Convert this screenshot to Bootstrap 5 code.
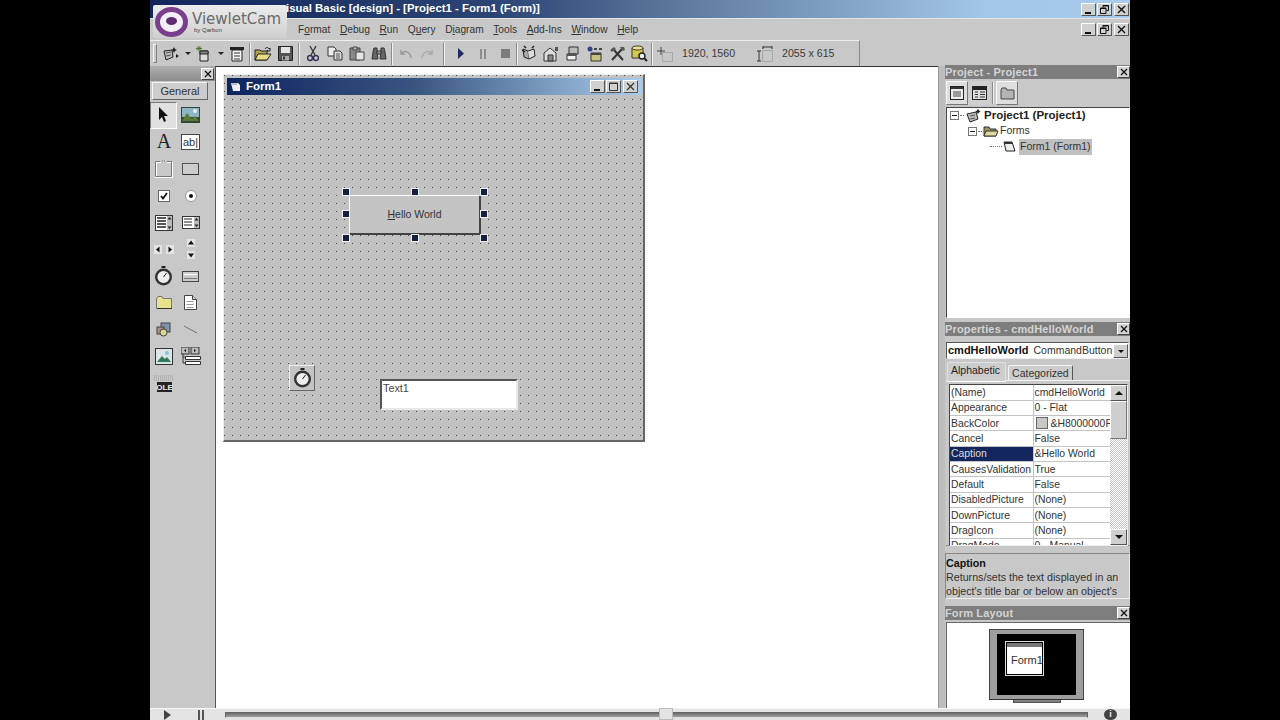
<!DOCTYPE html>
<html lang="en">
<head>
<meta charset="UTF-8">
<title>Project1 - Microsoft Visual Basic [design]</title>
<link rel="stylesheet" href="https://cdn.jsdelivr.net/npm/bootstrap@5.3.0/dist/css/bootstrap.min.css">
<style>
body { background: #000; font-family: "Liberation Sans", Arial, sans-serif; font-size: 11px; color: #222; }
svg { display: block; }
.vb-app { width: 980px; height: 720px; margin: 0 auto; background: #c8c8c8; overflow: hidden; position: relative; }
.vb-titlebar { height: 19px; background: linear-gradient(90deg, #12265c 0%, #2b4474 35%, #5e7ca0 55%, #a4c6e6 85%, #aaccec 100%); color: #fff; font-weight: 700; font-size: 11.4px; padding-left: 136px; border-bottom: 1px solid #e4e4e4; }
.vb-menubar { height: 21px; padding-left: 148px; gap: 9.6px; font-size: 10.2px; color: #333; }
.vb-wbtns { margin-left: auto; margin-right: 1px; gap: 1px; }
.vb-wbtn { width: 15px; height: 13px; background: #d0d0d0; border: 1px solid; border-color: #fff #555 #555 #fff; display: flex; align-items: center; justify-content: center; padding: 0; }
.vb-wbtn-x { margin-left: 1px; }
.vb-toolbar { height: 26px; }
.vb-tools { width: 710px; height: 26px; padding-left: 10px; border-top: 1px solid #eee; border-right: 1px solid #888; position: relative; }
.vb-grip { position: absolute; left: 3px; top: 3px; bottom: 3px; width: 4px; border: 1px solid; border-color: #f2f2f2 #808080 #808080 #f2f2f2; }
.vb-ti { width: 22px; height: 24px; display: flex; align-items: center; justify-content: center; flex: none; }
.vb-drop { width: 11px; height: 24px; display: flex; align-items: center; justify-content: center; flex: none; }
.vb-drop::after { content: ""; border: 3px solid transparent; border-top-color: #222; border-bottom: 0; }
.vb-sep { width: 6px; height: 22px; flex: none; display: flex; justify-content: center; }
.vb-sep::after { content: ""; width: 2px; background: linear-gradient(90deg, #8c8c8c 50%, #f0f0f0 50%); }
.vb-sep-s { width: 4px; }
.vb-sep-m { width: 12px; }
.vb-sep-t { width: 2px; }
.vb-coord { font-size: 10.6px; color: #3a3a3a; padding-left: 6px; width: 78px; flex: none; }
.vb-main { height: 642px; }
.vb-toolbox { width: 65px; flex: none; }
.vb-dock-x { width: 13px; height: 12px; background: #d4d4d4; border: 1px solid; border-color: #fff #444 #444 #fff; display: flex; align-items: center; justify-content: center; padding: 0; }
.vb-tbox-head { height: 15px; background: linear-gradient(180deg, #b0b0b0, #8c8c8c); justify-content: flex-end; padding-right: 1px; }
.vb-general { width: 56px; height: 18px; margin: 1px 0 2px 2px; background: #cdcdcd; border: 1px solid; border-color: #f4f4f4 #666 #666 #f4f4f4; text-align: center; line-height: 16px; font-size: 11px; color: #333; }
.vb-tgrid { display: grid; grid-template-columns: 27px 27px; grid-auto-rows: 26.8px; }
.vb-tcell { display: flex; align-items: center; justify-content: center; }
.vb-tcell-on { background: #e0e0e0; border: 1px solid; border-color: #777 #fff #fff #777; }
.vb-canvas { width: 723px; flex: none; background: #fff; border-top: 1px solid #333; border-left: 1px solid #555; position: relative; }
.vb-form { position: absolute; left: 7px; top: 7px; width: 422px; height: 368px; border-right: 2px solid #666; border-bottom: 2px solid #666; border-top: 1px solid #eee; border-left: 1px solid #eee; background-color: #4a4a4a; background-image: linear-gradient(90deg, transparent 1px, #c2c2c2 1px), linear-gradient(180deg, transparent 1px, #c2c2c2 1px); background-size: 8px 8px; }
.vb-form-title { position: absolute; left: 3px; top: 3px; width: 414px; height: 17px; background: linear-gradient(90deg, #0e2460 0%, #385580 45%, #a9cbec 100%); color: #fff; font-weight: 700; font-size: 11.5px; padding: 0 3px; gap: 4px; }
.vb-form-btns { margin-left: auto; gap: 1px; }
.vb-cmd { position: absolute; left: 125px; top: 120px; width: 132px; height: 40px; background: #c4c4c4; border: 1px solid; border-color: #fff #444 #444 #fff; border-width: 1px 2px 2px 1px; text-align: center; line-height: 37px; color: #333; font-size: 10.5px; }
.vb-handle { position: absolute; width: 6px; height: 6px; background: #14203e; outline: 1px solid #eee; }
.vb-h1 { left: 119px; top: 114px; } .vb-h2 { left: 188px; top: 114px; } .vb-h3 { left: 257px; top: 114px; }
.vb-h4 { left: 119px; top: 136px; } .vb-h5 { left: 257px; top: 136px; }
.vb-h6 { left: 119px; top: 160px; } .vb-h7 { left: 188px; top: 160px; } .vb-h8 { left: 257px; top: 160px; }
.vb-timer { position: absolute; left: 65px; top: 290px; width: 26px; height: 26px; background: #c4c4c4; border: 1px solid; border-color: #eee #666 #666 #eee; display: flex; align-items: center; justify-content: center; }
.vb-text { position: absolute; left: 156px; top: 304px; width: 138px; height: 31px; background: #fff; border: 2px solid; border-color: #555 #e8e8e8 #e8e8e8 #555; padding: 1px 0 0 1px; line-height: 13px; font-size: 10.8px; color: #444; }
.vb-gapcol { width: 7px; flex: none; background: #bdbdbd; border-left: 1px solid #999; }
.vb-right { width: 185px; flex: none; margin-top: -1px; }
.vb-ptitle { height: 14px; background: #7d7d7d; color: #d4d4d4; font-weight: 700; font-size: 11px; letter-spacing: .15px; flex: none; }
.vb-ptitle .vb-dock-x { margin-left: auto; }
.vb-ptools { height: 28px; padding-left: 1px; flex: none; }
.vb-pt { width: 22px; height: 24px; display: flex; align-items: center; justify-content: center; background: #cfcfcf; }
.vb-pt-on { background: #dedede; border: 1px solid; border-color: #f8f8f8 #777 #777 #f8f8f8; }
.vb-psep { width: 2px; height: 22px; margin: 0 2px; background: linear-gradient(90deg, #8c8c8c 50%, #f0f0f0 50%); }
.vb-tree { height: 211px; margin-left: 1px; background: #fff; border: 1px solid; border-color: #444 #fff #fff #444; padding: 0 0 0 3px; flex: none; color: #333; font-size: 10.5px; }
.vb-trow { height: 15.5px; gap: 1px; }
.vb-trow-1 { font-size: 11.5px; font-weight: 700; color: #222; }
.vb-trow-2 { padding-left: 18px; }
.vb-trow-3 { padding-left: 40px; }
.vb-exp { width: 9px; height: 9px; border: 1px solid #777; background: #fff; display: flex; align-items: center; justify-content: center; flex: none; }
.vb-exp::after { content: ""; width: 5px; height: 1px; background: #222; }
.vb-dots { width: 4px; border-top: 1px dotted #777; flex: none; }
.vb-dots-long { width: 12px; }
.vb-tsel { background: #c0c0c0; padding: 0 1px; margin-left: 2px; }
.vb-combo { height: 17px; margin: 6px 1px 0 1px; background: #fff; border: 1px solid; border-color: #555 #eee #eee #555; padding-left: 1px; flex: none; color: #333; white-space: nowrap; overflow: hidden; font-size: 10.5px; }
.vb-combo b { font-size: 11px; color: #111; margin-right: 5px; }
.vb-combo-btn { margin-left: auto; width: 15px; height: 14px; background: #cfcfcf; border: 1px solid; border-color: #fff #555 #555 #fff; display: flex; align-items: center; justify-content: center; flex: none; }
.vb-combo-btn::after { content: ""; border: 3px solid transparent; border-top-color: #111; border-bottom: 0; margin-top: 2px; }
.vb-right .nav-tabs { margin: 3px 0 0 2px; border: 0; height: 18px; gap: 2px; flex: none; }
.vb-right .nav-link { padding: 0 3px; font-size: 10.5px; line-height: 14px; height: 16px; margin-top: 3px; color: #333; background: #cdcdcd; border: 1px solid; border-color: #f4f4f4 #555 transparent #f4f4f4; border-radius: 2px 2px 0 0; }
.vb-right .nav-link.active { height: 20px; margin-top: 0; background: #cdcdcd; color: #222; padding: 0 5px 0 3px; line-height: 15px; position: relative; }
.vb-sheet { height: 166px; margin: 0 0 0 1px; padding: 3px 3px 0 3px; border-top: 1px solid #f4f4f4; border-bottom: 1px solid #888; flex: none; }
.vb-grid { width: 179px; height: 162px; border: 1px solid; border-color: #444 #eee #eee #444; background: #fff; overflow: hidden; }
.vb-gridbody { width: 160px; height: 160px; overflow: hidden; flex: none; }
.vb-props { width: 160px; border-collapse: collapse; table-layout: fixed; color: #333; font-size: 10.4px; }
.vb-props td { height: 15.33px; padding: 0 0 0 1px; border-bottom: 1px solid #c4c4c4; white-space: nowrap; overflow: hidden; line-height: 13px; }
.vb-props td:first-child { width: 83px; border-right: 1px solid #c4c4c4; }
.vb-props .vb-selrow { background: #14265e; color: #ddd; }
.vb-swatch { display: inline-block; width: 12px; height: 12px; background: #c8c8c8; border: 1px solid #666; margin: 0 3px 0 1px; vertical-align: -2px; }
.vb-scroll { width: 17px; flex: none; background: repeating-conic-gradient(#fff 0 25%, #c4c4c4 0 50%) 0 0 / 2px 2px; }
.vb-sbtn { width: 17px; height: 16px; background: #cfcfcf; border: 1px solid; border-color: #fff #555 #555 #fff; display: flex; align-items: center; justify-content: center; flex: none; }
.vb-sbtn-up::after { content: ""; border: 4px solid transparent; border-bottom-color: #111; border-top: 0; }
.vb-sbtn-dn::after { content: ""; border: 4px solid transparent; border-top-color: #111; border-bottom: 0; }
.vb-sthumb { height: 38px; width: 17px; background: #cfcfcf; border: 1px solid; border-color: #fff #777 #777 #fff; flex: none; }
.vb-desc { height: 46px; margin: 7px 0 0 0; padding: 2px 0 0 0; border: 1px solid; border-color: #888 #eee #eee #888; color: #333; line-height: 14px; font-size: 10.7px; overflow: hidden; flex: none; white-space: nowrap; }
.vb-desc b { color: #111; display: block; }
.vb-ptitle-form { margin-top: 7px; }
.vb-layout { flex: 1; background: #fff; margin: 2px 0 0 1px; border-left: 1px solid #666; border-top: 1px solid #666; padding-top: 6px; }
.vb-monitor { width: 95px; height: 75px; margin-left: 42px; position: relative; }
.vb-mon-frame { width: 95px; height: 71px; background: #9e9e9e; border: 1px solid #444; border-color: #444 #444 #333 #444; padding: 4px 7px; }
.vb-mon-screen { width: 79px; height: 61px; background: #000; position: relative; }
.vb-mon-base { width: 48px; height: 3px; background: #808080; border: 1px solid #555; border-top: 0; margin: 0 auto; }
.vb-mon-form { position: absolute; left: 9px; top: 8px; width: 37px; height: 33px; background: #fff; border: 1px solid #000; outline: 1px solid #ddd; font-size: 11px; color: #333; line-height: 12px; white-space: nowrap; overflow: hidden; }
.vb-mon-form i { display: block; height: 4px; margin-bottom: 7px; background: #777; }
.vb-mon-form span { padding-left: 4px; }
.vb-player { height: 12px; background: #e4e4e4; border-top: 1px solid #f6f6f6; position: relative; }
.vb-pbtn { width: 34px; flex: none; justify-content: center; }
.vb-track { flex: none; width: 863px; margin-left: 7px; height: 6px; background: linear-gradient(180deg, #6c6c6c, #a0a0a0); border: 1px solid #666; border-bottom-color: #ddd; position: relative; }
.vb-thumb { position: absolute; left: 433px; top: -5px; width: 14px; height: 12px; background: #e4e4e4; border: 1px solid #bbb; }
.vb-info { margin-left: 16px; width: 13px; height: 11px; border-radius: 50%; background: #444; color: #eee; font-size: 9px; line-height: 11px; text-align: center; font-weight: 700; }
.vb-logo { position: absolute; left: 3px; top: 5px; width: 134px; height: 33px; background: linear-gradient(180deg, #ececec, #cfcfcf); gap: 4px; padding-left: 2px; border-radius: 2px; }
.vb-logo-name { font-family: "DejaVu Sans", sans-serif; font-size: 15px; line-height: 15px; color: #6a6a6a; white-space: nowrap; margin-top: 3px; }
.vb-logo-by { font-size: 6px; line-height: 7px; color: #444; margin-left: 2px; }
</style>
</head>
<body>
<div class="vb-app d-flex flex-column">

  <div class="vb-titlebar d-flex align-items-center position-relative">
    <span>isual Basic [design] - [Project1 - Form1 (Form)]</span>
    <div class="vb-wbtns d-flex">
      <div class="vb-wbtn"><svg width="9" height="9"><rect x="1" y="7" width="6" height="2" fill="#111"/></svg></div>
      <div class="vb-wbtn"><svg width="9" height="9" fill="none" stroke="#111"><path d="M3 2.5V.5h5.500v5H6.500M.5 3h5.500v5.500H.5z"/><path d="M3 1h5M1 3.500h5"/></svg></div>
      <div class="vb-wbtn vb-wbtn-x"><svg width="9" height="9" stroke="#111" stroke-width="1.400"><path d="M1 1l7 7M8 1l-7 7"/></svg></div>
    </div>
  </div>

  <div class="vb-menubar d-flex align-items-center">
    <span>F<u>o</u>rmat</span><span><u>D</u>ebug</span><span><u>R</u>un</span><span>Q<u>u</u>ery</span><span>D<u>i</u>agram</span><span><u>T</u>ools</span><span><u>A</u>dd-Ins</span><span><u>W</u>indow</span><span><u>H</u>elp</span>
    <div class="vb-wbtns d-flex">
      <div class="vb-wbtn"><svg width="9" height="9"><rect x="1" y="7" width="6" height="2" fill="#111"/></svg></div>
      <div class="vb-wbtn"><svg width="9" height="9" fill="none" stroke="#111"><path d="M3 2.500V.5h5.500v5H6.500M.5 3h5.500v5.500H.5z"/><path d="M3 1h5M1 3.500h5"/></svg></div>
      <div class="vb-wbtn vb-wbtn-x"><svg width="9" height="9" stroke="#111" stroke-width="1.400"><path d="M1 1l7 7M8 1l-7 7"/></svg></div>
    </div>
  </div>

  <div class="vb-toolbar">
    <div class="vb-tools d-flex align-items-center">
      <div class="vb-grip"></div>
      <div class="vb-ti"><svg width="18" height="18" viewBox="0 0 18 18"><path d="M2 6l8-1 1 7-7 3z" fill="#bbb" stroke="#222"/><path d="M4 8l5-1M4 11l5-1" stroke="#555"/><path d="M12 2l1 2 2 1-2 1-1 2-1-2-2-1 2-1zM14 9l3 2-3 2z" fill="#222"/></svg></div>
      <div class="vb-drop"></div>
      <div class="vb-ti"><svg width="18" height="18" viewBox="0 0 18 18"><path d="M5 6h8v10H5z" fill="#ddd" stroke="#222"/><path d="M5 6h8v3H5z" fill="#888" stroke="#222"/><path d="M4 1v5M1 3.500h6M2 1.500l4 4M6 1.500l-4 4" stroke="#4c7a2e"/></svg></div>
      <div class="vb-drop"></div>
      <div class="vb-ti"><svg width="16" height="18" viewBox="0 0 16 18"><path d="M1 2h14v3H1z" fill="#222"/><path d="M3 5h10v11H3z" fill="#f4f4f4" stroke="#222"/><path d="M5 8h6M5 11h6M5 14h6" stroke="#333"/></svg></div>
      <div class="vb-sep vb-sep-s"></div>
      <div class="vb-ti"><svg width="18" height="16" viewBox="0 0 18 16"><path d="M1 4h5l1 1h6v9H1z" fill="#b0a24e" stroke="#222"/><path d="M1 14l3-6h13l-4 6z" fill="#e9dc86" stroke="#222"/><path d="M11 3c1-2 3-2 4 0l1-1v3h-3l1-1" fill="none" stroke="#222"/></svg></div>
      <div class="vb-ti"><svg width="15" height="15" viewBox="0 0 15 15"><path d="M.5.5h14v14H.5z" fill="#555" stroke="#222"/><path d="M3 1h9v6H3z" fill="#e6e6e6"/><path d="M4 10h7v4.500H4z" fill="#aaa"/><path d="M5 10.500h2v3H5z" fill="#333"/></svg></div>
      <div class="vb-sep"></div>
      <div class="vb-ti"><svg width="12" height="17" viewBox="0 0 12 17" fill="none"><path d="M3 1l5 9M9 1L4 10" stroke="#333" stroke-width="1.300"/><circle cx="3" cy="13" r="2.500" stroke="#335" stroke-width="1.500"/><circle cx="9" cy="13" r="2.500" stroke="#335" stroke-width="1.500"/></svg></div>
      <div class="vb-ti"><svg width="16" height="15" viewBox="0 0 16 15"><path d="M1 1h6l2 2v7H1z" fill="#eee" stroke="#333"/><path d="M7 5h6l2 2v7H7z" fill="#ddd" stroke="#333"/><path d="M9 8h4M9 10h4M9 12h4" stroke="#555"/></svg></div>
      <div class="vb-ti"><svg width="16" height="15" viewBox="0 0 16 15"><path d="M1 2h10v12H1z" fill="#888" stroke="#444"/><path d="M4 1h4v3H4z" fill="#bbb" stroke="#444"/><path d="M7 6h8v8H7z" fill="#e4e4e4" stroke="#444"/></svg></div>
      <div class="vb-ti"><svg width="16" height="14" viewBox="0 0 16 14"><path d="M3 1h3v4l1 7H1l1-7zM10 1h3l1 4 1 7H9l1-7z" fill="#666" stroke="#333"/><path d="M6 4h4v3H6z" fill="#999" stroke="#333"/></svg></div>
      <div class="vb-sep vb-sep-s"></div>
      <div class="vb-ti"><svg width="15" height="12" viewBox="0 0 15 12" fill="none" stroke="#999" stroke-width="1.500"><path d="M3 2v4h4M3 6c3-4 9-3 10 4"/></svg></div>
      <div class="vb-ti"><svg width="15" height="12" viewBox="0 0 15 12" fill="none" stroke="#aaa" stroke-width="1.500"><path d="M12 2v4H8M12 6C9 2 3 3 2 10"/></svg></div>
      <div class="vb-sep vb-sep-m"></div>
      <div class="vb-ti"><svg width="8" height="11" viewBox="0 0 8 11"><path d="M1 0l6 5.500L1 11z" fill="#1e2a64"/></svg></div>
      <div class="vb-ti"><svg width="8" height="10" viewBox="0 0 8 10"><path d="M1 0h2v10H1zM5 0h2v10H5z" fill="#8c8c8c"/></svg></div>
      <div class="vb-ti"><svg width="9" height="9" viewBox="0 0 9 9"><rect width="9" height="9" fill="#7c7c7c"/></svg></div>
      <div class="vb-sep vb-sep-t"></div>
      <div class="vb-ti"><svg width="16" height="17" viewBox="0 0 16 17"><path d="M2 4l5 2 1 8-5-2z" fill="#aaa" stroke="#222"/><path d="M8 14l6-3-1-7-6 2" fill="#ddd" stroke="#222"/><path d="M3 1l2 2M13 1l-2 2M1 5l3 2" stroke="#222" stroke-width="1.500"/></svg></div>
      <div class="vb-ti"><svg width="16" height="16" viewBox="0 0 16 16"><path d="M1 7l6-5 6 5v8H1z" fill="#ddd" stroke="#333"/><path d="M5 9h5v6H5z" fill="#888" stroke="#333"/><path d="M12 1h3v4h-3z" fill="#555"/></svg></div>
      <div class="vb-ti"><svg width="15" height="15" viewBox="0 0 15 15"><path d="M3 1h9v7H3z" fill="#bbb" stroke="#333"/><path d="M1 8h9v6H1z" fill="#f2f2f2" stroke="#333"/><path d="M1 8h9v2H1z" fill="#555"/></svg></div>
      <div class="vb-ti"><svg width="17" height="16" viewBox="0 0 17 16"><circle cx="3" cy="3" r="2.500" fill="#26468a"/><path d="M7 2h3v2H7zM12 2h3v2h-3z" fill="#444"/><path d="M4 7h10v8H4z" fill="#c7c27a" stroke="#333"/><path d="M4 7h10v2H4z" fill="#444"/></svg></div>
      <div class="vb-ti"><svg width="17" height="16" viewBox="0 0 17 16"><path d="M3 14L13 3M14 14L5 4" stroke="#333" stroke-width="2"/><path d="M1 4l4-3 2 2-4 3zM11 1h4l1 3-3 1z" fill="#555"/></svg></div>
      <div class="vb-ti"><svg width="18" height="17" viewBox="0 0 18 17"><path d="M2 3h11v10H2z" fill="#d4c648" stroke="#333"/><ellipse cx="7.500" cy="3" rx="5.500" ry="2" fill="#efe48a" stroke="#333"/><circle cx="12" cy="11" r="3" fill="#eee" stroke="#222" stroke-width="1.400"/><path d="M14 13l3 3" stroke="#222" stroke-width="2"/></svg></div>
      <div class="vb-sep vb-sep-s"></div>
      <div class="vb-ti"><svg width="16" height="16" viewBox="0 0 16 16" fill="none"><path d="M4 1v8M0 5h8" stroke="#444"/><path d="M5.500 6.500h10v9h-10z" stroke="#888" stroke-dasharray="1 1"/></svg></div>
      <div class="vb-coord">1920, 1560</div>
      <div class="vb-ti"><svg width="16" height="16" viewBox="0 0 16 16" fill="none"><path d="M5.500 4.500h10v11h-10z" stroke="#888" stroke-dasharray="1 1"/><path d="M6 1h9M6 0v3M15 0v3M2 5v10M0 5h4M0 15h4" stroke="#333"/></svg></div>
      <div class="vb-coord">2055 x 615</div>
    </div>
  </div>

  <div class="vb-main d-flex">
    <div class="vb-toolbox d-flex flex-column">
      <div class="vb-tbox-head d-flex align-items-center">
        <div class="vb-dock-x"><svg width="8" height="8" stroke="#111" stroke-width="1.300"><path d="M1 1l6 6M7 1l-6 6"/></svg></div>
      </div>
      <div class="vb-general">General</div>
      <div class="vb-tgrid">
        <div class="vb-tcell vb-tcell-on"><svg width="12" height="16" viewBox="0 0 12 16"><path d="M1 0v13l3-3 2 5 2-1-2-5h4z" fill="#111"/></svg></div>
        <div class="vb-tcell"><svg width="19" height="16" viewBox="0 0 19 16"><rect width="19" height="16" fill="#2e4a34"/><rect x="1" y="1" width="17" height="9" fill="#8fb6c8"/><path d="M1 14l5-8 5 6 3-3 4 5z" fill="#5a7a3a"/><circle cx="14" cy="4" r="2" fill="#eee"/></svg></div>
        <div class="vb-tcell"><svg width="20" height="24" viewBox="0 0 20 24"><text x="10" y="18" font-family="Liberation Serif, serif" font-size="20" fill="#222" text-anchor="middle">A</text></svg></div>
        <div class="vb-tcell"><svg width="19" height="16" viewBox="0 0 19 16"><rect x=".5" y=".5" width="18" height="15" fill="#fff" stroke="#444"/><text x="9.500" y="12" font-family="Liberation Sans, sans-serif" font-size="11" fill="#333" text-anchor="middle">ab|</text></svg></div>
        <div class="vb-tcell"><svg width="18" height="18" viewBox="0 0 18 18" fill="none"><path d="M1 2h5M12 2h5M1 2v15h16V2" stroke="#fff" stroke-width="2"/><path d="M.5 1.500h5M12 1.500h5M.5 1.500v15h16v-15" stroke="#777"/><path d="M7 1h4" stroke="#777" stroke-dasharray="1 1"/></svg></div>
        <div class="vb-tcell"><svg width="17" height="12" viewBox="0 0 17 12"><rect x=".5" y=".5" width="16" height="11" fill="#ccc" stroke="#555"/><path d="M1 11.500h16V1" stroke="#333" fill="none"/></svg></div>
        <div class="vb-tcell"><svg width="12" height="12" viewBox="0 0 12 12"><rect x=".5" y=".5" width="11" height="11" fill="#fff" stroke="#666"/><path d="M3 6l2 2.500L9 3" fill="none" stroke="#111" stroke-width="1.800"/></svg></div>
        <div class="vb-tcell"><svg width="12" height="12" viewBox="0 0 12 12"><circle cx="6" cy="6" r="5.500" fill="#fff" stroke="#999"/><circle cx="6" cy="6" r="2" fill="#111"/></svg></div>
        <div class="vb-tcell"><svg width="18" height="16" viewBox="0 0 18 16"><rect x=".5" y=".5" width="17" height="15" fill="#fff" stroke="#333"/><path d="M2 3h9M2 6h9M2 9h9M2 12h9" stroke="#222" stroke-width="1.300"/><rect x="12" y="1" width="5" height="14" fill="#bbb"/><path d="M14.500 2l2 2.500h-4zM14.500 14l2-2.500h-4z" fill="#222"/></svg></div>
        <div class="vb-tcell"><svg width="18" height="13" viewBox="0 0 18 13"><rect x=".5" y=".5" width="17" height="12" fill="#fff" stroke="#333"/><path d="M2 3h8M2 6h8M2 9h8" stroke="#222" stroke-width="1.200"/><rect x="12" y="1" width="5" height="11" fill="#bbb"/><path d="M14.500 2l2 2.500h-4zM14.500 11l2-2.500h-4z" fill="#222"/></svg></div>
        <div class="vb-tcell gap-1"><svg width="8" height="9" viewBox="0 0 8 9"><rect width="8" height="9" fill="#e4e4e4"/><path d="M5.500 1.500L2 4.500l3.500 3z" fill="#111"/></svg><svg width="8" height="9" viewBox="0 0 8 9"><rect width="8" height="9" fill="#e4e4e4"/><path d="M2.500 1.500L6 4.500l-3.500 3z" fill="#111"/></svg></div>
        <div class="vb-tcell flex-column gap-1"><svg width="8" height="8" viewBox="0 0 8 8"><rect width="8" height="8" fill="#e4e4e4"/><path d="M4 1.500L1 5.500h6z" fill="#111"/></svg><svg width="8" height="8" viewBox="0 0 8 8"><rect width="8" height="8" fill="#e4e4e4"/><path d="M4 6.500L1 2.500h6z" fill="#111"/></svg></div>
        <div class="vb-tcell"><svg width="17" height="20" viewBox="0 0 17 20"><path d="M6.500 0h4v2h-4z" fill="#222"/><circle cx="8.500" cy="11" r="7.300" fill="#eee" stroke="#333" stroke-width="2.400"/><path d="M8.500 11l3-4" stroke="#222"/></svg></div>
        <div class="vb-tcell"><svg width="17" height="11" viewBox="0 0 17 11"><rect x=".5" y=".5" width="16" height="10" fill="#ccc" stroke="#444"/><path d="M2 3.500h13" stroke="#fff"/><path d="M2 7.500h13" stroke="#777"/></svg></div>
        <div class="vb-tcell"><svg width="16" height="13" viewBox="0 0 16 13"><path d="M.5 3v9.500h15v-10H7L6 .5H2z" fill="#e8e28c" stroke="#777"/><path d="M1 12.500h15" stroke="#333"/></svg></div>
        <div class="vb-tcell"><svg width="13" height="15" viewBox="0 0 13 15"><path d="M.5.5h8l4 4v10H.5z" fill="#fff" stroke="#444"/><path d="M8.500.5v4h4" fill="#ccc" stroke="#444"/><path d="M2.500 6h7v1h-7zM2.500 9h7v1h-7zM2.500 12h7v1h-7z" fill="#999"/></svg></div>
        <div class="vb-tcell"><svg width="15" height="15" viewBox="0 0 15 15"><rect x="5" y="1" width="9" height="9" fill="#7d93ad" stroke="#444"/><rect x="1" y="5" width="7" height="7" fill="#b38f7e" stroke="#444"/><circle cx="7.500" cy="10.500" r="3.500" fill="#dcd98a" stroke="#444"/></svg></div>
        <div class="vb-tcell"><svg width="15" height="9" viewBox="0 0 15 9"><path d="M1 1l13 7" stroke="#777"/></svg></div>
        <div class="vb-tcell"><svg width="18" height="17" viewBox="0 0 18 17"><rect x=".5" y=".5" width="17" height="16" fill="#dce6e6" stroke="#333"/><path d="M2 14l5-6 3 3 2-2 4 5z" fill="#2f7a5a"/><circle cx="12" cy="5" r="2" fill="#89c1d6"/></svg></div>
        <div class="vb-tcell"><svg width="20" height="19" viewBox="0 0 20 19"><rect y="0" width="8" height="7" fill="#bbb" stroke="#333"/><rect x="10" y="0" width="8" height="7" fill="#bbb" stroke="#333"/><path d="M5 2L3 3.500 5 5zM13 2l2 1.500L13 5z" fill="#111"/><path d="M2 7v9h2M2 10h2" stroke="#333" fill="none"/><path d="M4.500 9.500h15v3h-15zM4.500 14.500h15v3h-15z" fill="#fff" stroke="#333"/></svg></div>
        <div class="vb-tcell"><svg width="20" height="17" viewBox="0 0 20 17"><path d="M0 1h20M0 3h20M0 5h20" stroke="#999" stroke-dasharray="1 1"/><rect x="3" y="7" width="15" height="10" fill="#222"/><text x="10.500" y="15" font-family="Liberation Sans, sans-serif" font-size="8" font-weight="700" fill="#eee" text-anchor="middle">OLE</text></svg></div>
      </div>
    </div>

    <div class="vb-canvas">
      <div class="vb-form">
        <div class="vb-form-title d-flex align-items-center">
          <svg width="12" height="10" viewBox="0 0 12 10"><path d="M1 1h7l2 2v6H3z" fill="#eee"/><path d="M1 1h6v2H1z" fill="#bbb"/></svg>
          <span>Form1</span>
          <div class="vb-form-btns d-flex">
            <div class="vb-wbtn"><svg width="9" height="9"><rect x="1" y="7" width="6" height="2" fill="#111"/></svg></div>
            <div class="vb-wbtn"><svg width="9" height="9" fill="none" stroke="#333"><path d="M.5 1h8v7.500h-8z"/><path d="M1 1.500h7"/></svg></div>
            <div class="vb-wbtn vb-wbtn-x"><svg width="9" height="9" stroke="#333" stroke-width="1.200"><path d="M1 1l7 7M8 1l-7 7"/></svg></div>
          </div>
        </div>
        <div class="vb-cmd"><u>H</u>ello World</div>
        <div class="vb-handle vb-h1"></div><div class="vb-handle vb-h2"></div><div class="vb-handle vb-h3"></div>
        <div class="vb-handle vb-h4"></div><div class="vb-handle vb-h5"></div>
        <div class="vb-handle vb-h6"></div><div class="vb-handle vb-h7"></div><div class="vb-handle vb-h8"></div>
        <div class="vb-timer"><svg width="17" height="20" viewBox="0 0 17 20"><path d="M6.500 0h4v2h-4z" fill="#222"/><circle cx="8.500" cy="11" r="7.300" fill="#eee" stroke="#333" stroke-width="2.400"/><path d="M8.500 11l3-4" stroke="#222"/></svg></div>
        <div class="vb-text">Text1</div>
      </div>
    </div>

    <div class="vb-gapcol"></div>

    <div class="vb-right d-flex flex-column">
      <div class="vb-ptitle d-flex align-items-center">Project - Project1
        <div class="vb-dock-x"><svg width="8" height="8" stroke="#111" stroke-width="1.300"><path d="M1 1l6 6M7 1l-6 6"/></svg></div>
      </div>
      <div class="vb-ptools d-flex align-items-center">
        <div class="vb-pt vb-pt-on"><svg width="14" height="14" viewBox="0 0 14 14"><rect x=".5" y=".5" width="13" height="13" fill="#eee" stroke="#222"/><path d="M1 1h12v2H1z" fill="#333"/><path d="M3 6h8M3 8h8M3 10h8" stroke="#444"/></svg></div>
        <div class="vb-pt"><svg width="15" height="14" viewBox="0 0 15 14"><rect x=".5" y=".5" width="14" height="13" fill="#ddd" stroke="#222"/><path d="M1 1h13v3H1z" fill="#222"/><path d="M3 6h3M8 6h5M3 8.500h3M8 8.500h5M3 11h3M8 11h5" stroke="#333"/></svg></div>
        <div class="vb-psep"></div>
        <div class="vb-pt vb-pt-on"><svg width="15" height="13" viewBox="0 0 15 13"><path d="M1 12V3l1-2h4l1 2h7v9z" fill="#b4b4b4" stroke="#444"/></svg></div>
      </div>
      <div class="vb-tree">
        <div class="vb-trow vb-trow-1 d-flex align-items-center">
          <div class="vb-exp"></div><div class="vb-dots"></div>
          <svg width="18" height="15" viewBox="0 0 18 15"><path d="M2 6l9-2 2 7-8 3z" fill="#bbb" stroke="#222"/><path d="M5 8l5-1M5 11l5-1" stroke="#555"/><path d="M13 1l1 1.500 1.500 1-1.500 1-1 1.500-1-1.500-1.500-1 1.500-1z" fill="#222"/></svg>
          <span>Project1 (Project1)</span>
        </div>
        <div class="vb-trow vb-trow-2 d-flex align-items-center">
          <div class="vb-exp"></div><div class="vb-dots"></div>
          <svg width="16" height="12" viewBox="0 0 16 12"><path d="M1 11V2h5l1 2h6v7z" fill="#9a9460" stroke="#333"/><path d="M1 11l2-5h12l-2 5z" fill="#dfdb9f" stroke="#333"/></svg>
          <span>Forms</span>
        </div>
        <div class="vb-trow vb-trow-3 d-flex align-items-center">
          <div class="vb-dots vb-dots-long"></div>
          <svg width="13" height="13" viewBox="0 0 13 13"><path d="M1 2h8l3 9H3z" fill="#eee" stroke="#222"/><path d="M1 2h8l.7 2H1.600z" fill="#333"/></svg>
          <span class="vb-tsel">Form1 (Form1)</span>
        </div>
      </div>

      <div class="vb-ptitle d-flex align-items-center mt-1">Properties - cmdHelloWorld
        <div class="vb-dock-x"><svg width="8" height="8" stroke="#111" stroke-width="1.300"><path d="M1 1l6 6M7 1l-6 6"/></svg></div>
      </div>
      <div class="vb-combo d-flex align-items-center">
        <b>cmdHelloWorld</b><span>CommandButton</span><div class="vb-combo-btn"></div>
      </div>
      <ul class="nav nav-tabs">
        <li class="nav-item"><a class="nav-link active" href="#">Alphabetic</a></li>
        <li class="nav-item"><a class="nav-link" href="#">Categorized</a></li>
      </ul>
      <div class="vb-sheet">
        <div class="vb-grid d-flex">
          <div class="vb-gridbody">
            <table class="vb-props">
              <tr><td>(Name)</td><td>cmdHelloWorld</td></tr>
              <tr><td>Appearance</td><td>0 - Flat</td></tr>
              <tr><td>BackColor</td><td><span class="vb-swatch"></span>&amp;H8000000F</td></tr>
              <tr><td>Cancel</td><td>False</td></tr>
              <tr><td class="vb-selrow">Caption</td><td>&amp;Hello World</td></tr>
              <tr><td>CausesValidation</td><td>True</td></tr>
              <tr><td>Default</td><td>False</td></tr>
              <tr><td>DisabledPicture</td><td>(None)</td></tr>
              <tr><td>DownPicture</td><td>(None)</td></tr>
              <tr><td>DragIcon</td><td>(None)</td></tr>
              <tr><td>DragMode</td><td>0 - Manual</td></tr>
            </table>
          </div>
          <div class="vb-scroll d-flex flex-column">
            <div class="vb-sbtn vb-sbtn-up"></div>
            <div class="vb-sthumb"></div>
            <div class="vb-sbtn vb-sbtn-dn mt-auto"></div>
          </div>
        </div>
      </div>
      <div class="vb-desc"><b>Caption</b>Returns/sets the text displayed in an<br>object's title bar or below an object's</div>

      <div class="vb-ptitle vb-ptitle-form d-flex align-items-center">Form Layout
        <div class="vb-dock-x"><svg width="8" height="8" stroke="#111" stroke-width="1.300"><path d="M1 1l6 6M7 1l-6 6"/></svg></div>
      </div>
      <div class="vb-layout">
        <div class="vb-monitor">
          <div class="vb-mon-frame">
            <div class="vb-mon-screen">
              <div class="vb-mon-form"><i></i><span>Form1</span></div>
            </div>
          </div>
          <div class="vb-mon-base"></div>
        </div>
      </div>
    </div>
  </div>

  <div class="vb-player d-flex align-items-center">
    <div class="vb-pbtn d-flex"><svg width="9" height="10" viewBox="0 0 9 10"><path d="M1 0l7 5-7 5z" fill="#444"/></svg></div>
    <div class="vb-pbtn d-flex"><svg width="8" height="10" viewBox="0 0 8 10"><path d="M1 0h2v10H1zM5 0h2v10H5z" fill="#555"/></svg></div>
    <div class="vb-track"><div class="vb-thumb"></div></div>
    <div class="vb-info">i</div>
  </div>

  <div class="vb-logo d-flex align-items-center">
    <svg width="33" height="30" viewBox="0 0 33 30"><ellipse cx="16.500" cy="15" rx="14" ry="12.500" fill="#f4eef6" stroke="#7a3f8c" stroke-width="5"/><ellipse cx="16.500" cy="14" rx="5.500" ry="4" fill="#5e2a70"/></svg>
    <div>
      <div class="vb-logo-name">ViewletCam</div>
      <div class="vb-logo-by">by Qarbon</div>
    </div>
  </div>
</div>
<script src="https://cdn.jsdelivr.net/npm/bootstrap@5.3.0/dist/js/bootstrap.bundle.min.js"></script>
</body>
</html>
